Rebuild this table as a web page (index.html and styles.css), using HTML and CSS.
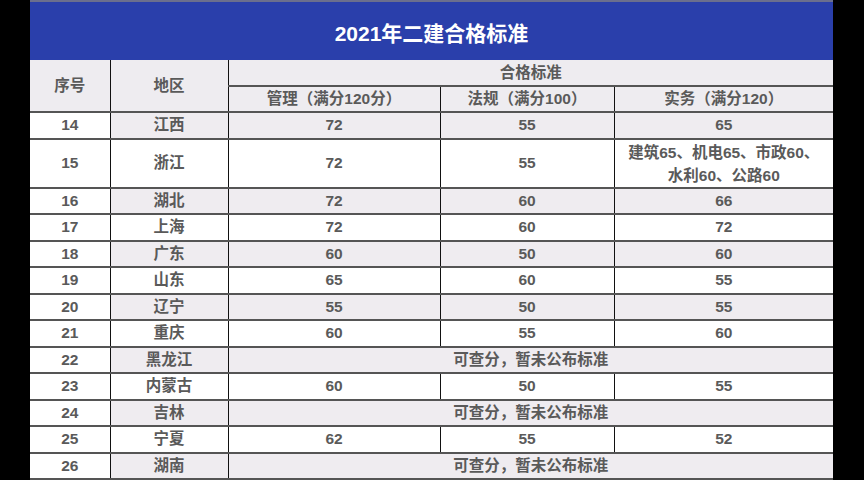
FILE: index.html
```html
<!DOCTYPE html>
<html lang="zh-CN">
<head>
<meta charset="utf-8">
<title>2021年二建合格标准</title>
<link rel="stylesheet" href="styles.css">
</head>
<body>
<div class="sheet">
  <div class="title">2021年二建合格标准</div>
  <table class="grid">
    <colgroup>
      <col class="c1"><col class="c2"><col class="c3"><col class="c4"><col class="c5">
    </colgroup>
    <thead>
      <tr class="h1">
        <th rowspan="2">序号</th>
        <th rowspan="2">地区</th>
        <th colspan="3" class="group">合格标准</th>
      </tr>
      <tr class="h2">
        <th>管理（满分120分）</th>
        <th>法规（满分100）</th>
        <th>实务（满分120）</th>
      </tr>
    </thead>
    <tbody>
      <tr class="alt"><td>14</td><td>江西</td><td>72</td><td>55</td><td>65</td></tr>
      <tr class="tall"><td>15</td><td>浙江</td><td>72</td><td>55</td><td class="multi">建筑65、机电65、市政60、<br>水利60、公路60</td></tr>
      <tr class="alt"><td>16</td><td>湖北</td><td>72</td><td>60</td><td>66</td></tr>
      <tr><td>17</td><td>上海</td><td>72</td><td>60</td><td>72</td></tr>
      <tr class="alt"><td>18</td><td>广东</td><td>60</td><td>50</td><td>60</td></tr>
      <tr><td>19</td><td>山东</td><td>65</td><td>60</td><td>55</td></tr>
      <tr class="alt"><td>20</td><td>辽宁</td><td>55</td><td>50</td><td>55</td></tr>
      <tr><td>21</td><td>重庆</td><td>60</td><td>55</td><td>60</td></tr>
      <tr class="alt"><td>22</td><td>黑龙江</td><td colspan="3">可查分，暂未公布标准</td></tr>
      <tr><td>23</td><td>内蒙古</td><td>60</td><td>50</td><td>55</td></tr>
      <tr class="alt"><td>24</td><td>吉林</td><td colspan="3">可查分，暂未公布标准</td></tr>
      <tr><td>25</td><td>宁夏</td><td>62</td><td>55</td><td>52</td></tr>
      <tr class="alt"><td>26</td><td>湖南</td><td colspan="3">可查分，暂未公布标准</td></tr>
    </tbody>
  </table>
</div>
</body>
</html>
```

FILE: styles.css
```css
html, body {
  margin: 0;
  padding: 0;
  background: #000;
  height: 480px;
  overflow: hidden;
}

.sheet {
  margin-left: 30px;
  width: 803px;
  font-family: "Liberation Sans", "Noto Sans CJK SC", sans-serif;
}

.title {
  height: 60px;
  box-sizing: border-box;
  border-top: 2px solid #6b6f8e;
  padding-top: 1px;
  background: #2a3fab;
  color: #fff;
  font-weight: 700;
  font-size: 21px;
  display: flex;
  align-items: center;
  justify-content: center;
}

.grid {
  width: 803px;
  border-collapse: collapse;
  table-layout: fixed;
  color: #5a5a5a;
  font-size: 15.5px;
  font-weight: 700;
}

.c1 { width: 80px; }
.c2 { width: 118px; }
.c3 { width: 212px; }
.c4 { width: 174px; }
.c5 { width: 219px; }

.grid th,
.grid td {
  padding: 0;
  text-align: center;
  vertical-align: middle;
  border-left: 1px solid #111;
  border-right: 1px solid #111;
  border-top: 2px solid #555;
  border-bottom: 2px solid #555;
  line-height: 18px;
  background: #fff;
}

.grid tr > :first-child { border-left: none; }
.grid tr > :last-child { border-right: none; }

.grid thead th {
  background: #eeecf0;
  font-weight: 700;
}

.grid thead tr.h1 th { border-top: none; }
.grid thead th.group { border-bottom: 1px solid #111; }

.h1 { height: 26px; }
.h2 { height: 26px; }

.grid tbody tr { height: 26.5px; }
.grid tbody tr.tall { height: 48.5px; }

.grid tbody tr.alt td { background: #efecf0; }
.grid tbody tr.alt td:first-child { background: #fff; }

.grid td.multi {
  line-height: 23px;
  padding-top: 1px;
}
```
